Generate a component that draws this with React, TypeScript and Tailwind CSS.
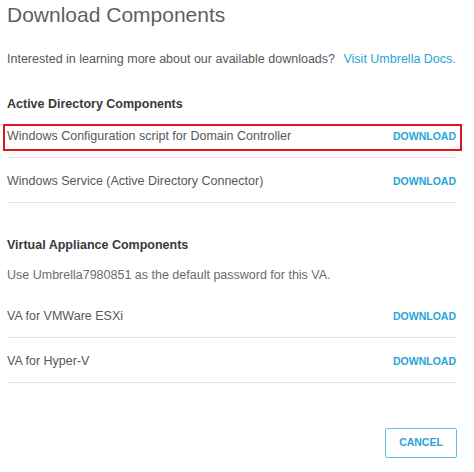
import React from "react";

const rowsAd = [
  { name: "Windows Configuration script for Domain Controller", highlight: true },
  { name: "Windows Service (Active Directory Connector)" },
];

const rowsVa = [{ name: "VA for VMWare ESXi" }, { name: "VA for Hyper-V" }];

const Row = ({ name, highlight }: { name: string; highlight?: boolean }) => (
  <div className="relative flex h-[45px] items-center justify-between border-b border-[#e3e3e3] pt-[3px]">
    <span className="text-[12.5px] text-[#58585b]">{name}</span>
    <button className="mr-[1px] text-[10.5px] font-bold text-[#2aa3d8]">DOWNLOAD</button>
    {highlight && (
      <span className="absolute left-[-4px] right-[-5px] top-[11px] h-[27px] border-2 border-[#e0141e]" />
    )}
  </div>
);

export default function App() {
  return (
    <div
      className="h-[472px] w-[474px] overflow-hidden bg-white pl-[7px] pr-[17px]"
      style={{ fontFamily: '"Liberation Sans", Arial, sans-serif' }}
    >
      {/* Header */}
      <h1 className="pt-[1px] text-[21px] font-light leading-[28px] text-[#5f5f62]">
        Download Components
      </h1>
      <p className="mt-[20px] whitespace-nowrap text-[12.5px] leading-[20px] text-[#58585b]">
        Interested in learning more about our available downloads?{" "}
        <a className="ml-[5px] text-[#2aa3d8]">Visit Umbrella Docs.</a>
      </p>

      {/* Active Directory */}
      <h2 className="mt-[27px] text-[12.5px] font-bold leading-[16px] text-[#39393b]">
        Active Directory Components
      </h2>
      <div className="mt-[1px]">
        {rowsAd.map((r) => (
          <Row key={r.name} {...r} />
        ))}
      </div>

      {/* Virtual Appliance */}
      <h2 className="mt-[34px] text-[12.5px] font-bold leading-[16px] text-[#39393b]">
        Virtual Appliance Components
      </h2>
      <p className="mt-[12px] text-[12.5px] leading-[20px] text-[#6b6b6e]">
        Use Umbrella7980851 as the default password for this VA.
      </p>
      <div className="mt-[8px]">
        {rowsVa.map((r) => (
          <Row key={r.name} {...r} />
        ))}
      </div>

      <div className="mt-[45px] flex justify-end">
        <button className="h-[30px] w-[72px] rounded-[2px] border border-[#64bde3] text-[10.5px] font-bold text-[#2aa3d8]">
          CANCEL
        </button>
      </div>
    </div>
  );
}
